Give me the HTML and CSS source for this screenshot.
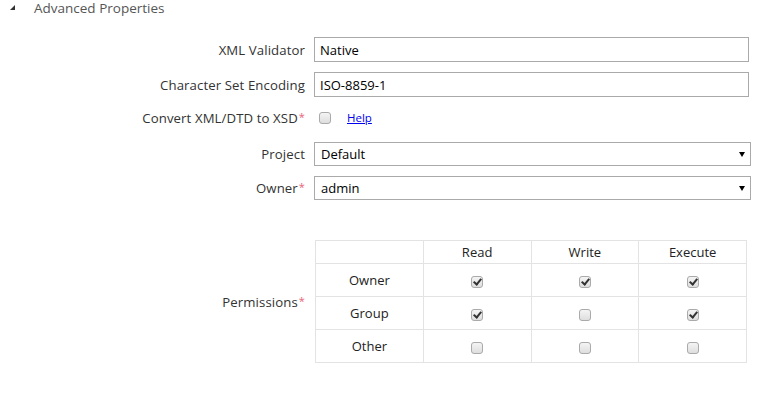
FILE: index.html
```html
<!DOCTYPE html>
<html lang="en">
<head>
    <meta charset="UTF-8">
    <meta name="viewport" content="width=device-width, initial-scale=1.0">
    <title>Advanced Properties</title>
    <link rel="stylesheet" href="styles.css">
</head>
<body>
    <div class="section-header">
        <svg class="toggle-icon" width="8" height="8" viewBox="0 0 8 8"><polygon points="6,1 6,6 1,6" fill="#333"/></svg>
        <span class="section-title">Advanced Properties</span>
    </div>

    <div class="form">
        <div class="row row-input">
            <label class="label">XML Validator</label>
            <div class="control"><input type="text" class="text-input" value="Native"></div>
        </div>
        <div class="row row-input">
            <label class="label">Character Set Encoding</label>
            <div class="control"><input type="text" class="text-input" value="ISO-8859-1"></div>
        </div>
        <div class="row row-check">
            <label class="label">Convert XML/DTD to XSD<span class="req">*</span></label>
            <div class="control control-inline">
                <input type="checkbox" class="check">
                <a href="#" class="help-link">Help</a>
            </div>
        </div>
        <div class="row row-select">
            <label class="label">Project</label>
            <div class="control select-wrap">
                <select class="select"><option>Default</option></select>
            </div>
        </div>
        <div class="row row-select">
            <label class="label">Owner<span class="req">*</span></label>
            <div class="control select-wrap">
                <select class="select"><option>admin</option></select>
            </div>
        </div>
        <div class="row row-perms">
            <label class="label">Permissions<span class="req">*</span></label>
            <div class="control">
                <table class="perm-table">
                    <thead>
                        <tr><th></th><th>Read</th><th>Write</th><th>Execute</th></tr>
                    </thead>
                    <tbody>
                        <tr>
                            <td>Owner</td>
                            <td><input type="checkbox" class="check" checked></td>
                            <td><input type="checkbox" class="check" checked></td>
                            <td><input type="checkbox" class="check" checked></td>
                        </tr>
                        <tr>
                            <td>Group</td>
                            <td><input type="checkbox" class="check" checked></td>
                            <td><input type="checkbox" class="check"></td>
                            <td><input type="checkbox" class="check" checked></td>
                        </tr>
                        <tr>
                            <td>Other</td>
                            <td><input type="checkbox" class="check"></td>
                            <td><input type="checkbox" class="check"></td>
                            <td><input type="checkbox" class="check"></td>
                        </tr>
                    </tbody>
                </table>
            </div>
        </div>
    </div>
</body>
</html>
```

FILE: styles.css
```css
body {
    margin: 0;
    font-family: 'Open Sans', 'Noto Sans', sans-serif;
    font-size: 13px;
    color: #222;
    background-color: #fff;
}

.section-header {
    display: flex;
    align-items: center;
    height: 16px;
    padding-left: 9px;
}

.toggle-icon {
    display: block;
    margin-right: 17px;
}

.section-title {
    font-size: 13.5px;
    color: #555;
}

.form {
    display: flex;
    flex-direction: column;
    padding-top: 21px;
}

.row {
    display: flex;
    align-items: center;
}

.label {
    width: 314px;
    flex-shrink: 0;
    box-sizing: border-box;
    padding-right: 9px;
    text-align: right;
    font-size: 13.2px;
    letter-spacing: 0.1px;
    color: #333;
}

.req {
    color: #e8637a;
    margin-left: 1px;
    font-size: 11px;
    vertical-align: 2px;
}

.control {
    flex: 1;
}

.row-input {
    height: 25px;
    margin-bottom: 10px;
}

.row-check {
    height: 25px;
    margin-top: -2px;
    margin-bottom: 12px;
}

.row-select {
    height: 24px;
    margin-bottom: 10px;
}

.row-perms {
    margin-top: 30px;
}

.text-input {
    width: 435px;
    height: 25px;
    box-sizing: border-box;
    border: 1px solid #aaa;
    padding: 0 5px;
    font-family: inherit;
    font-size: 13px;
    color: #000;
    outline: none;
}

.control-inline {
    display: flex;
    align-items: center;
}

.help-link {
    margin-left: 16px;
    color: #0000ee;
    font-size: 11.5px;
    text-decoration: underline;
}

.check {
    appearance: none;
    -webkit-appearance: none;
    width: 12px;
    height: 12px;
    margin: 0 0 0 5px;
    border: 1px solid #aaa;
    border-radius: 3px;
    background: linear-gradient(#f4f4f4, #dedede);
    box-sizing: border-box;
    position: relative;
    vertical-align: middle;
}

.check:checked::after {
    content: '';
    position: absolute;
    left: 3px;
    top: 0px;
    width: 3px;
    height: 6px;
    border-right: 2px solid #333;
    border-bottom: 2px solid #333;
    transform: rotate(40deg);
}

.select-wrap {
    position: relative;
    width: 437px;
    flex: none;
}

.select {
    appearance: none;
    -webkit-appearance: none;
    width: 437px;
    height: 24px;
    box-sizing: border-box;
    border: 1px solid #aaa;
    border-radius: 0;
    background-color: #fff;
    padding: 0 6px;
    font-family: inherit;
    font-size: 13px;
    color: #000;
    outline: none;
}

.select-wrap::after {
    content: '';
    position: absolute;
    right: 6px;
    top: 10px;
    border-left: 3px solid transparent;
    border-right: 3px solid transparent;
    border-top: 5px solid #000;
    pointer-events: none;
}

.perm-table {
    border-collapse: collapse;
    width: 432px;
    margin-left: 1px;
}

.perm-table th,
.perm-table td {
    border: 1px solid #e3e3e3;
    width: 25%;
    text-align: center;
    font-weight: normal;
    font-size: 13px;
    color: #222;
    padding: 0;
}

.perm-table th {
    height: 22px;
}

.perm-table td {
    height: 32px;
}

.perm-table .check {
    margin: 0;
    display: inline-block;
}
```
